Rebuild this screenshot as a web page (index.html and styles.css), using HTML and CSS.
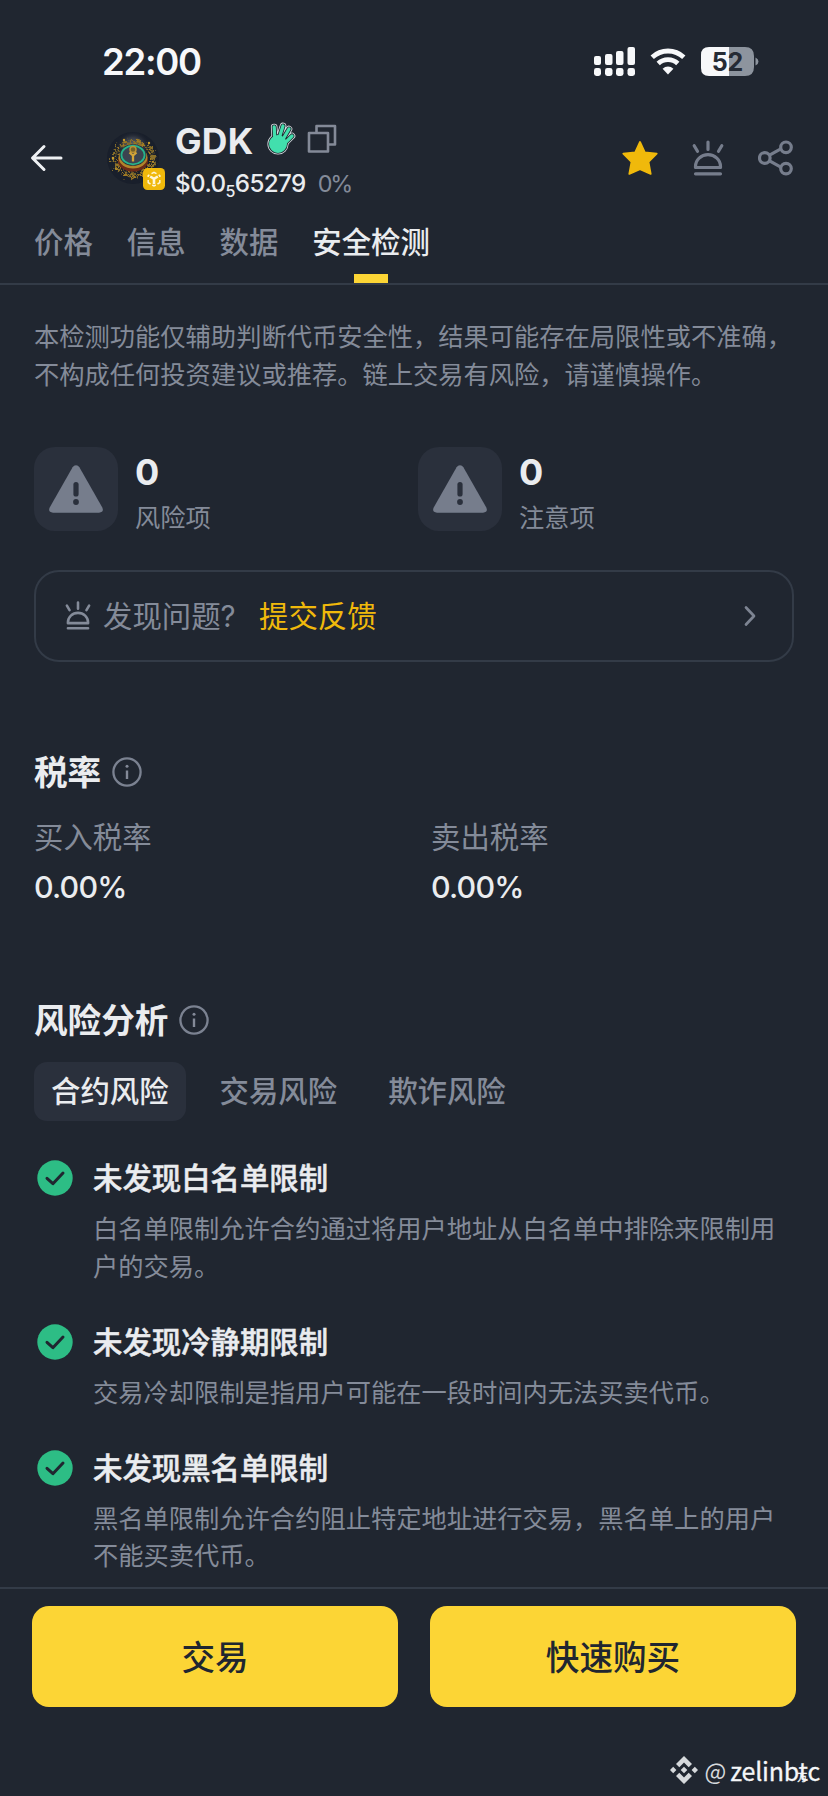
FILE: index.html
```html
<!DOCTYPE html>
<html lang="zh-CN">
<head>
<meta charset="utf-8">
<title>GDK 安全检测</title>
<link rel="stylesheet" href="styles.css">
</head>
<body>
<svg class="defs" width="0" height="0">
  <symbol id="siren" viewBox="0 0 32 36"><g fill="none" stroke="currentColor" stroke-width="3.200" stroke-linecap="round" stroke-linejoin="round"><path d="M16 2v7.500M2.200 5.700l3.300 5.600M29.800 5.700l-3.300 5.600M3.500 27.500v-1a12.500 11.800 0 0 1 25 0v1zM3.500 33.800h25"/></g></symbol>
  <symbol id="warn" viewBox="0 0 54 48"><path d="M23.600 2.200a4 4 0 0 1 6.800 0L53.300 42.500q2 4.900-3.300 5.200H4q-5.300-.3-3.300-5.200z" fill="#767d8c"/><path d="M27 19.500v9.500" stroke="#2a303c" stroke-width="5.200" stroke-linecap="round"/><circle cx="27" cy="37" r="2.900" fill="#2a303c"/></symbol>
  <symbol id="info" viewBox="0 0 30 30"><circle cx="15" cy="15" r="13.600" fill="none" stroke="#7b8291" stroke-width="2.300"/><circle cx="15" cy="9.300" r="1.500" fill="#848a98"/><path d="M15 13.500v8.500" stroke="#848a98" stroke-width="2.400"/></symbol>
  <symbol id="check" viewBox="0 0 36 36"><circle cx="18" cy="18" r="17.700" fill="#2dbd85"/><path d="M10 18.300l5.900 5.400L26 13" fill="none" stroke="#202630" stroke-width="3" stroke-linecap="round" stroke-linejoin="round"/></symbol>
</svg>

<div class="status">
  <span class="time">22:00</span>
  <svg class="signals" width="168" height="32" viewBox="0 0 168 32">
    <g fill="#f7f8fa">
      <rect x="1" y="10" width="7" height="9" rx="2"/><rect x="12" y="8" width="7.500" height="11" rx="2"/><rect x="23" y="5" width="7.500" height="14" rx="2"/><rect x="34.500" y="1" width="7.500" height="18" rx="2"/>
      <rect x="1" y="22" width="7" height="8" rx="2.400"/><rect x="12" y="22" width="7.500" height="8" rx="2.400"/><rect x="23" y="22" width="7.500" height="8" rx="2.400"/><rect x="34.500" y="22" width="7.500" height="8" rx="2.400"/>
      <path d="M69.600 22.700a8 8 0 0 1 10.800 0L75 28.500z"/>
    </g>
    <g fill="none" stroke="#f7f8fa" stroke-width="4.800"><path d="M59.200 11.300a23 23 0 0 1 31.600 0M65.200 17.500a14.300 14.300 0 0 1 19.600 0"/></g>
    <path d="M117 1h-1q-8 0-8 8v13q0 8 8 8h20V1z" fill="#f7f8fa"/>
    <path d="M136 1h16q9 0 9 9v11q0 9-9 9h-16zM162.500 11.500q3 1.300 3 4t-3 4z" fill="#8d949e"/>
    <text class="battery-text" x="134.500" y="24.500" text-anchor="middle">52</text>
  </svg>
</div>

<header class="header">
  <svg class="back" width="34" height="28" viewBox="0 0 34 28"><path d="M31 14H3M14 2.500L2.500 14 14 25.500" fill="none" stroke="#eef0f3" stroke-width="3" stroke-linecap="round" stroke-linejoin="round"/></svg>
  <div class="avatar">
    <svg width="58" height="60" viewBox="0 0 58 60">
      <defs>
        <radialGradient id="glow"><stop offset="0" stop-color="#6a717b"/><stop offset=".6" stop-color="#353a45"/><stop offset="1" stop-color="#191f2b" stop-opacity="0"/></radialGradient>
        <filter id="scatter" x="-20%" y="-20%" width="140%" height="140%"><feTurbulence type="fractalNoise" baseFrequency=".25" numOctaves="2" seed="4"/><feDisplacementMap in="SourceGraphic" scale="13" xChannelSelector="R" yChannelSelector="G"/></filter>
      </defs>
      <circle cx="26" cy="27" r="26" fill="#191f2b"/>
      <ellipse cx="26" cy="16" rx="17" ry="16" fill="url(#glow)"/>
      <g fill="none" filter="url(#scatter)">
        <ellipse cx="27" cy="27" rx="20" ry="16" stroke="#8a7029" stroke-width="5" stroke-dasharray="2 2 1 1.500 3 2"/>
        <ellipse cx="27" cy="29" rx="16" ry="17" stroke="#a37b24" stroke-width="2.500" stroke-dasharray="1 2 3 1.500"/>
      </g>
      <g fill="#c79b2c"><circle cx="17" cy="9" r="1.200"/><circle cx="42" cy="12" r="1.200"/><circle cx="6" cy="27" r="1.300"/><circle cx="9" cy="38" r="1"/><circle cx="46" cy="31" r="1"/></g>
      <ellipse cx="26" cy="30" rx="15" ry="10.500" fill="#6b2916"/>
      <ellipse cx="26" cy="26.500" rx="14.500" ry="11" fill="#b0852a"/>
      <ellipse cx="26" cy="24" rx="13.300" ry="10.800" fill="#292f39"/>
      <ellipse cx="26" cy="24" rx="11.600" ry="9.300" fill="#3c4450" stroke="#27b48b" stroke-width="1.800"/>
      <circle cx="26" cy="18.500" r="3" fill="#746126" stroke="#ba9134" stroke-width="1.500"/>
      <path d="M22.500 21.500l3.500 3 3.500-3M26 23v7.500" fill="none" stroke="#d4a638" stroke-width="2.300"/>
    </svg>
    <svg class="chain" width="22" height="22" viewBox="0 0 22 22"><rect width="22" height="22" rx="4.500" fill="#f0b90b"/><g fill="none" stroke="#fff6d6" stroke-width="1.500"><path d="M8.500 5.700L11 4.300l2.500 1.400M5.200 9V7.600l1.200-.8M16.800 9V7.600l-1.200-.8M5.200 12v2.600l2.300 1.400M16.800 12v2.600L14.500 16M9.200 17l1.800 1 1.800-1"/><path d="M7.200 8.500L11 10.800l3.800-2.300M11 10.800V16" stroke-width="2.600"/></g></svg>
  </div>
  <div class="token">
    <div class="token-name"><span class="symbol">GDK</span>
      <svg class="hand" width="30" height="33" viewBox="0 0 30 33"><g fill="none" stroke-linecap="round" stroke-linejoin="round"><g stroke="#d9dfe4"><path d="M9 20L8.200 5M12.500 18L17 4M16 19l7-12M18 22l8-8" stroke-width="6.600"/><circle cx="12" cy="22" r="7.500" stroke-width="6.200"/></g><g stroke="#20272f"><path d="M9 20L8.200 5M12.500 18L17 4M16 19l7-12M18 22l8-8" stroke-width="5"/><circle cx="12" cy="22" r="7.500" stroke-width="4.600"/></g><g stroke="#42dfad"><path d="M9 20L8.200 5M12.500 18L17 4M16 19l7-12M18 22l8-8" stroke-width="3.300"/><circle cx="12" cy="22" r="7.500" stroke-width="3" fill="#42dfad"/></g></g></svg>
      <svg class="copy" width="30" height="30" viewBox="0 0 30 30"><path d="M2 9h19v18.500H2zM9.500 9V2H28v18.500h-7" fill="none" stroke="#848a98" stroke-width="2.600" stroke-linejoin="round"/></svg>
    </div>
    <div class="price"><span>$0.0<small>5</small>65279</span><em>0%</em></div>
  </div>
  <div class="actions">
    <svg width="36" height="36" viewBox="0 0 36 36"><path d="M18 2l4.800 10.300 11.900 1.300-8.200 8.300 2.200 12L18 29.200 7.300 33.900l2.200-12-8.200-8.300 11.900-1.300z" fill="#f0b90b" stroke="#f0b90b" stroke-width="1.800" stroke-linejoin="round"/></svg>
    <svg width="32" height="36"><use href="#siren"/></svg>
    <svg width="36" height="36" viewBox="0 0 36 36"><g fill="none" stroke="currentColor" stroke-width="3.200"><path d="M12 14.800l10.800-6M12 21.200l10.800 6"/><circle cx="6.800" cy="18" r="5.300"/><circle cx="28" cy="7.300" r="5.300"/><circle cx="28" cy="28.600" r="5.300"/></g></svg>
  </div>
</header>

<nav class="tabs"><span>价格</span><span>信息</span><span>数据</span><span class="active">安全检测</span></nav>

<main class="content">
  <p class="notice">本检测功能仅辅助判断代币安全性，结果可能存在局限性或不准确，<br>不构成任何投资建议或推荐。链上交易有风险，请谨慎操作。</p>

  <section class="counts">
    <div class="count"><span class="tile"><svg width="54" height="48"><use href="#warn"/></svg></span><div><b>0</b><span>风险项</span></div></div>
    <div class="count"><span class="tile"><svg width="54" height="48"><use href="#warn"/></svg></span><div><b>0</b><span>注意项</span></div></div>
  </section>

  <section class="feedback">
    <svg width="26" height="29"><use href="#siren"/></svg>
    <span class="question">发现问题?</span><span class="link">提交反馈</span>
    <svg class="chevron" width="14" height="22" viewBox="0 0 14 22"><path d="M3 2.500l8 8.500-8 8.500" fill="none" stroke="#7d8492" stroke-width="2.700" stroke-linecap="round" stroke-linejoin="round"/></svg>
  </section>

  <section class="tax">
    <h2><span>税率</span><svg width="30" height="30"><use href="#info"/></svg></h2>
    <dl><div><dt>买入税率</dt><dd>0.00%</dd></div><div><dt>卖出税率</dt><dd>0.00%</dd></div></dl>
  </section>

  <section class="risk">
    <h2><span>风险分析</span><svg width="30" height="30"><use href="#info"/></svg></h2>
    <div class="chips"><span class="chip selected">合约风险</span><span class="chip">交易风险</span><span class="chip">欺诈风险</span></div>
    <ul class="checks">
      <li><svg width="36" height="36"><use href="#check"/></svg><div><h3>未发现白名单限制</h3><p>白名单限制允许合约通过将用户地址从白名单中排除来限制用<br>户的交易。</p></div></li>
      <li><svg width="36" height="36"><use href="#check"/></svg><div><h3>未发现冷静期限制</h3><p>交易冷却限制是指用户可能在一段时间内无法买卖代币。</p></div></li>
      <li><svg width="36" height="36"><use href="#check"/></svg><div><h3>未发现黑名单限制</h3><p>黑名单限制允许合约阻止特定地址进行交易，黑名单上的用户<br>不能买卖代币。</p></div></li>
    </ul>
  </section>
</main>

<footer class="footer">
  <div class="buttons"><button>交易</button><button>快速购买</button></div>
  <div class="credit">
    <svg width="28" height="28" viewBox="0 0 28 28" fill="#d6d9dc"><path d="M14 0l8 8-3.300 3.200L14 6.500l-4.700 4.700L6 8zM14 28l8-8-3.300-3.200-4.700 4.700-4.700-4.700L6 20zM14 10.700l3.300 3.300-3.300 3.300-3.300-3.300zM3.200 10.800L6.400 14l-3.200 3.200L0 14zM24.800 10.800L28 14l-3.200 3.200-3.200-3.200z"/></svg>
    <span class="at">@</span><span class="handle">zelinbtc<i class="mark">万</i></span>
  </div>
</footer>
</body>
</html>
```
FILE: styles.css
```css
* { box-sizing: border-box; }
body {
  margin: 0;
  width: 828px;
  height: 1796px;
  overflow: hidden;
  display: flex;
  flex-direction: column;
  background: #202630;
  color: #eaecef;
  font-family: Inter, "Noto Sans CJK SC", sans-serif;
  font-size: 25.28px;
}
svg { display: block; flex: none; }
.defs { position: absolute; }
h2, h3, p, dl, dd, ul { margin: 0; padding: 0; }
ul { list-style: none; }

.status {
  height: 104px;
  padding: 46px 67px 0 102px;
  display: flex;
  justify-content: space-between;
}
.time { font-size: 36.5px; line-height: 33px; font-weight: 600; letter-spacing: -1.3px; color: #f7f8fa; }
.battery-text { font: 700 25px Inter, sans-serif; fill: #252b35; }

.header { height: 106px; display: flex; padding: 0 34px 0 30px; color: #767d8c; }
.back { margin-top: 40px; }
.avatar { position: relative; margin: 27px 0 0 43px; width: 58px; height: 60px; }
.chain { position: absolute; left: 36px; top: 37px; }
.token { margin-left: 10px; color: #eaecef; }
.token-name { display: flex; height: 60px; padding-top: 15px; }
.symbol { width: 90px; font-size: 35.5px; line-height: 45px; font-weight: 650; letter-spacing: .2px; }
.hand { margin: 3px 0 0 1px; }
.copy { margin: 5px 0 0 11px; }
.price { display: flex; gap: 12px; font-size: 24.2px; line-height: 40px; letter-spacing: -.6px; font-weight: 450; white-space: nowrap; }
.price small { font-size: 16px; position: relative; top: 5px; }
.price em { font-style: normal; font-size: 23.4px; font-weight: 400; letter-spacing: -2.2px; color: #848b99; }
.actions { margin: 36px 0 0 auto; display: flex; gap: 34px; }

.tabs { height: 75px; padding-left: 34px; display: flex; gap: 34px; border-bottom: 2px solid #333b47; font-size: 29.4px; line-height: 66px; font-weight: 500; color: #848b99; }
.active { color: #eaecef; display: flex; flex-direction: column; align-items: center; }
.active::after { content: ""; width: 34px; height: 9px; margin-top: -2px; background: #fcd535; }

.content { height: 1302px; padding: 34px 34px 0; color: #848b99; overflow: hidden; }
.notice { line-height: 37.6px; white-space: nowrap; }

.counts { display: grid; grid-template-columns: 384px 1fr; margin-top: 52.8px; height: 84px; }
.count { display: flex; gap: 17px; }
.tile { width: 84px; height: 84px; border-radius: 21px; background: #2a303c; display: grid; place-items: center; }
.count div { display: flex; flex-direction: column; }
.count b { font-size: 36px; line-height: 50px; height: 52px; font-weight: 700; color: #eaecef; }
.count div span { line-height: 38px; }

.feedback { height: 92px; margin-top: 39px; padding: 0 35px 0 29px; border: 2px solid #333b47; border-radius: 25px; display: flex; align-items: center; font-size: 29.4px; }
.question, .link { padding-bottom: 4px; }
.question { margin-left: 12px; width: 156px; }
.link { color: #f0b90b; }
.chevron { margin-left: auto; }

h2 { display: flex; align-items: center; gap: 11px; height: 50px; font-size: 33.6px; font-weight: 700; color: #eaecef; }
h2 span { padding-bottom: 3px; }
.tax { margin-top: 85px; height: 248px; }
dl { display: grid; grid-template-columns: 397px 1fr; margin-top: 20px; font-size: 29.4px; }
dt { line-height: 42px; }
dd { margin-top: 7px; font-size: 30.4px; line-height: 42px; font-weight: 450; letter-spacing: -.8px; color: #eaecef; }

.chips { display: flex; gap: 17px; margin-top: 17px; font-size: 29.4px; font-weight: 500; }
.chip { height: 59px; line-height: 60px; padding: 0 17px; border-radius: 13px; }
.selected { background: #2a303c; color: #eaecef; }

.checks { margin-top: 36px; padding-left: 3px; display: flex; flex-direction: column; gap: 34.5px; }
.checks li { display: flex; gap: 20px; }
.checks svg { margin-top: 3px; }
h3 { font-size: 29.4px; line-height: 43px; font-weight: 500; -webkit-text-stroke: .5px currentColor; color: #eaecef; }
.checks p { margin-top: 11px; line-height: 37.6px; white-space: nowrap; }

.footer { flex: 1; border-top: 2px solid #333b47; background: #202630; }
.buttons { display: grid; grid-template-columns: 1fr 1fr; gap: 32px; padding: 17px 32px 0; }
button { height: 101px; padding-bottom: 3px; border: 0; border-radius: 17px; background: #fcd535; color: #202630; font: 500 33.6px Inter, "Noto Sans CJK SC", sans-serif; }
.credit { display: flex; align-items: center; justify-content: flex-end; height: 38px; margin-top: 44px; padding-right: 8px; font-family: "Noto Sans CJK SC", sans-serif; font-size: 25px; color: #f5f6f8; }
.at { margin-left: 6px; font-size: 23px; color: #d6d9dc; }
.handle { position: relative; margin-left: 4px; font-weight: 400; -webkit-text-stroke: .3px currentColor; letter-spacing: -.2px; }
.mark { position: absolute; right: 13px; bottom: 5px; font-size: 10px; line-height: 12px; font-style: normal; }
```
